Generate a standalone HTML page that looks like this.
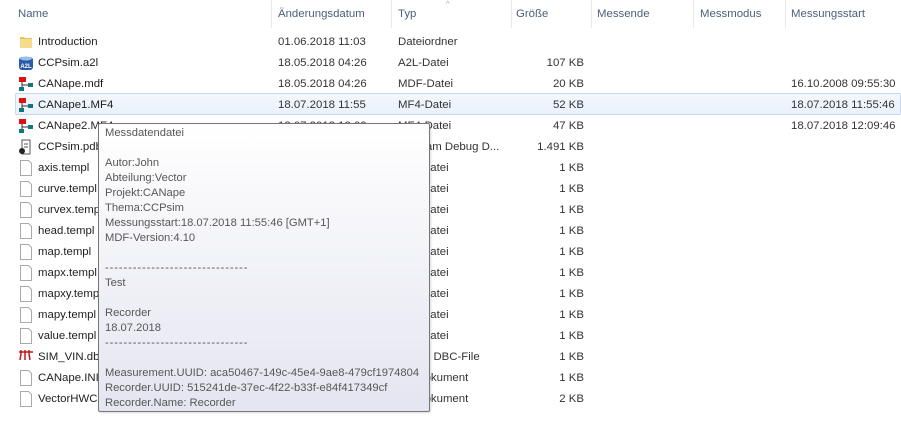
<!DOCTYPE html>
<html><head><meta charset="utf-8"><style>
*{margin:0;padding:0;box-sizing:border-box}
body{width:901px;height:430px;background:#fff;font-family:"Liberation Sans",sans-serif;font-size:11.4px;color:#1e1e1e;position:relative;overflow:hidden}
.h{position:absolute;top:8px;color:#4c607a;font-size:11.4px}
.sep{position:absolute;top:0;width:1px;height:28px;background:#e5eaf1}
.row{position:absolute;left:0;width:901px;height:21px}
.row span{position:absolute;top:5px;white-space:nowrap}
.n{left:38px}.d{left:278px;color:#333}.t{left:398px;color:#333}.s{right:317px;color:#333}.m{left:791px;color:#333}
.ic{position:absolute;left:18px;top:3px;width:16px;height:16px}
.sel{background:linear-gradient(#f3f7fd,#e9f1fb);border:1px solid #c5daf2;border-radius:2px;left:15px;width:886px}
.tip{position:absolute;left:98px;top:123px;width:332px;height:289px;border:1px solid #767676;border-radius:2px;background:linear-gradient(#ffffff,#e4e5f0);box-shadow:1px 1px 2px rgba(0,0,0,.15);color:#575757;padding:2px 0 0 6px;line-height:15px;font-size:11.2px;white-space:pre}
.dash{letter-spacing:0.9px}
</style></head><body>
<div class="h" style="left:18px">Name</div>
<div class="h" style="left:278px">Änderungsdatum</div>
<div class="h" style="left:398px">Typ</div>
<div style="position:absolute;left:446px;top:1px;font-size:7px;color:#8aa">^</div>
<div class="h" style="left:516px">Größe</div>
<div class="h" style="left:597px">Messende</div>
<div class="h" style="left:700px">Messmodus</div>
<div class="h" style="left:791px">Messungsstart</div>
<div class="sep" style="left:271px"></div><div class="sep" style="left:391px"></div><div class="sep" style="left:511px"></div><div class="sep" style="left:591px"></div><div class="sep" style="left:693px"></div><div class="sep" style="left:785px"></div>

<div class="row" style="top:31px"><svg class="ic" viewBox="0 0 16 16"><path d="M2 3h4l1 1h7v10H2z" fill="#e8c55a"/><rect x="2" y="5" width="12" height="9" fill="#f5dc8a"/></svg><span class="n">Introduction</span><span class="d">01.06.2018 11:03</span><span class="t">Dateiordner</span></div>
<div class="row" style="top:52px"><svg class="ic" viewBox="0 0 16 16"><rect x="1" y="2" width="14" height="13" rx="3" fill="#2a5aa8"/><ellipse cx="8" cy="3.5" rx="6" ry="2" fill="#9cc0ec"/><text x="8" y="13" font-size="6" fill="#fff" text-anchor="middle" font-family="Liberation Sans" font-weight="bold">A2L</text></svg><span class="n">CCPsim.a2l</span><span class="d">18.05.2018 04:26</span><span class="t">A2L-Datei</span><span class="s">107 KB</span></div>
<div class="row" style="top:73px"><svg class="ic" viewBox="0 0 16 16"><rect x="1" y="1" width="7" height="5" fill="#e01010"/><path d="M4 6v7M4 9h8" stroke="#333" fill="none"/><rect x="1" y="11" width="5" height="4" fill="#107878"/><rect x="10" y="7" width="5" height="4" fill="#107878"/></svg><span class="n">CANape.mdf</span><span class="d">18.05.2018 04:26</span><span class="t">MDF-Datei</span><span class="s">20 KB</span><span class="m">16.10.2008 09:55:30</span></div>
<div class="row sel" style="top:93px;height:22px"></div>
<div class="row" style="top:94px"><svg class="ic" viewBox="0 0 16 16"><rect x="1" y="1" width="7" height="5" fill="#e01010"/><path d="M4 6v7M4 9h8" stroke="#333" fill="none"/><rect x="1" y="11" width="5" height="4" fill="#107878"/><rect x="10" y="7" width="5" height="4" fill="#107878"/></svg><span class="n">CANape1.MF4</span><span class="d">18.07.2018 11:55</span><span class="t">MF4-Datei</span><span class="s">52 KB</span><span class="m">18.07.2018 11:55:46</span></div>
<div class="row" style="top:115px"><svg class="ic" viewBox="0 0 16 16"><rect x="1" y="1" width="7" height="5" fill="#e01010"/><path d="M4 6v7M4 9h8" stroke="#333" fill="none"/><rect x="1" y="11" width="5" height="4" fill="#107878"/><rect x="10" y="7" width="5" height="4" fill="#107878"/></svg><span class="n">CANape2.MF4</span><span class="d">18.07.2018 12:09</span><span class="t">MF4-Datei</span><span class="s">47 KB</span><span class="m">18.07.2018 12:09:46</span></div>
<div class="row" style="top:136px"><svg class="ic" viewBox="0 0 16 16"><path d="M4 1h8v14H4z" fill="#fff" stroke="#555"/><path d="M6 5h4M6 8h4" stroke="#555"/><circle cx="4" cy="12" r="3" fill="#222"/></svg><span class="n">CCPsim.pdb</span><span class="t">Program Debug D...</span><span class="s">1.491 KB</span></div>
<div class="row" style="top:157px"><svg class="ic" viewBox="0 0 16 16"><path d="M2.5 .5h8l3 3v12h-11z" fill="#fff" stroke="#aaa"/></svg><span class="n">axis.templ</span><span class="t">A2L-Datei</span><span class="s">1 KB</span></div>
<div class="row" style="top:178px"><svg class="ic" viewBox="0 0 16 16"><path d="M2.5 .5h8l3 3v12h-11z" fill="#fff" stroke="#aaa"/></svg><span class="n">curve.templ</span><span class="t">A2L-Datei</span><span class="s">1 KB</span></div>
<div class="row" style="top:199px"><svg class="ic" viewBox="0 0 16 16"><path d="M2.5 .5h8l3 3v12h-11z" fill="#fff" stroke="#aaa"/></svg><span class="n">curvex.templ</span><span class="t">A2L-Datei</span><span class="s">1 KB</span></div>
<div class="row" style="top:220px"><svg class="ic" viewBox="0 0 16 16"><path d="M2.5 .5h8l3 3v12h-11z" fill="#fff" stroke="#aaa"/></svg><span class="n">head.templ</span><span class="t">A2L-Datei</span><span class="s">1 KB</span></div>
<div class="row" style="top:241px"><svg class="ic" viewBox="0 0 16 16"><path d="M2.5 .5h8l3 3v12h-11z" fill="#fff" stroke="#aaa"/></svg><span class="n">map.templ</span><span class="t">A2L-Datei</span><span class="s">1 KB</span></div>
<div class="row" style="top:262px"><svg class="ic" viewBox="0 0 16 16"><path d="M2.5 .5h8l3 3v12h-11z" fill="#fff" stroke="#aaa"/></svg><span class="n">mapx.templ</span><span class="t">A2L-Datei</span><span class="s">1 KB</span></div>
<div class="row" style="top:283px"><svg class="ic" viewBox="0 0 16 16"><path d="M2.5 .5h8l3 3v12h-11z" fill="#fff" stroke="#aaa"/></svg><span class="n">mapxy.templ</span><span class="t">A2L-Datei</span><span class="s">1 KB</span></div>
<div class="row" style="top:304px"><svg class="ic" viewBox="0 0 16 16"><path d="M2.5 .5h8l3 3v12h-11z" fill="#fff" stroke="#aaa"/></svg><span class="n">mapy.templ</span><span class="t">A2L-Datei</span><span class="s">1 KB</span></div>
<div class="row" style="top:325px"><svg class="ic" viewBox="0 0 16 16"><path d="M2.5 .5h8l3 3v12h-11z" fill="#fff" stroke="#aaa"/></svg><span class="n">value.templ</span><span class="t">A2L-Datei</span><span class="s">1 KB</span></div>
<div class="row" style="top:346px"><svg class="ic" viewBox="0 0 16 16"><path d="M1 3h14M3 1v4M7 1v4M11 1v4M3 5l-1 6M7 5v6M11 5l1 6" stroke="#c01818" stroke-width="1.5" fill="none"/></svg><span class="n">SIM_VIN.dbc</span><span class="t">Vector DBC-File</span><span class="s">1 KB</span></div>
<div class="row" style="top:367px"><svg class="ic" viewBox="0 0 16 16"><path d="M2.5 .5h8l3 3v12h-11z" fill="#fff" stroke="#aaa"/></svg><span class="n">CANape.INI</span><span class="t">INI-Dokument</span><span class="s">1 KB</span></div>
<div class="row" style="top:388px"><svg class="ic" viewBox="0 0 16 16"><path d="M2.5 .5h8l3 3v12h-11z" fill="#fff" stroke="#aaa"/></svg><span class="n">VectorHWConfig.ini</span><span class="t">INI-Dokument</span><span class="s">2 KB</span></div>

<div class="tip">Messdatendatei

Autor:John
Abteilung:Vector
Projekt:CANape
Thema:CCPsim
Messungsstart:18.07.2018 11:55:46 [GMT+1]
MDF-Version:4.10

<span class="dash">-------------------------------</span>
Test

Recorder
18.07.2018
<span class="dash">-------------------------------</span>

Measurement.UUID: aca50467-149c-45e4-9ae8-479cf1974804
Recorder.UUID: 515241de-37ec-4f22-b33f-e84f417349cf
Recorder.Name: Recorder</div>
</body></html>
